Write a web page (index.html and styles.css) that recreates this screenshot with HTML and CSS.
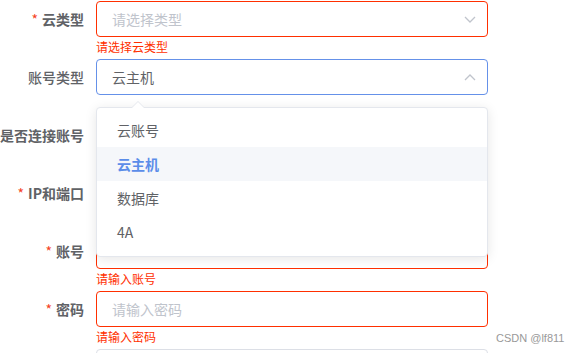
FILE: index.html
```html
<!DOCTYPE html>
<html lang="zh">
<head>
<meta charset="utf-8">
<link rel="stylesheet" href="styles.css">
</head>
<body>
<div class="form">
  <div class="item">
    <label class="label req">云类型</label>
    <div class="content">
      <div class="input error">
        <span class="placeholder">请选择类型</span>
        <svg class="chev" width="12" height="7" viewBox="0 0 12 7"><polyline points="1,1 6,6 11,1" fill="none" stroke="#c0c4cc" stroke-width="1.3"/></svg>
      </div>
      <div class="err">请选择云类型</div>
    </div>
  </div>
  <div class="item">
    <label class="label normal">账号类型</label>
    <div class="content">
      <div class="input focus">
        <span class="value">云主机</span>
        <svg class="chev" width="12" height="7" viewBox="0 0 12 7"><polyline points="1,6 6,1 11,6" fill="none" stroke="#c0c4cc" stroke-width="1.3"/></svg>
      </div>
    </div>
  </div>
  <div class="item">
    <label class="label">是否连接账号</label>
    <div class="content">
      <div class="input"></div>
    </div>
  </div>
  <div class="item">
    <label class="label req">IP和端口</label>
    <div class="content">
      <div class="input error"></div>
    </div>
  </div>
  <div class="item">
    <label class="label req">账号</label>
    <div class="content">
      <div class="input error"></div>
      <div class="err">请输入账号</div>
    </div>
  </div>
  <div class="item">
    <label class="label req">密码</label>
    <div class="content">
      <div class="input error"><span class="placeholder">请输入密码</span></div>
      <div class="err">请输入密码</div>
    </div>
  </div>
  <div class="item">
    <label class="label"></label>
    <div class="content">
      <div class="input"></div>
    </div>
  </div>

  <div class="dropdown">
    <div class="arrow"></div>
    <ul class="options">
      <li>云账号</li>
      <li class="selected">云主机</li>
      <li>数据库</li>
      <li>4A</li>
    </ul>
  </div>
</div>
<div class="watermark">CSDN @lf811</div>
</body>
</html>
```

FILE: styles.css
```css
html, body {
  margin: 0;
  padding: 0;
  background: #fff;
  overflow: hidden;
  height: 353px;
}
body {
  font-family: "Noto Sans CJK SC", "Noto Sans", sans-serif;
  color: #606266;
  position: relative;
}
.form {
  position: relative;
  padding-top: 1px;
  width: 488px;
}
.item {
  display: flex;
  margin-bottom: 22px;
}
.label {
  width: 96px;
  flex: none;
  box-sizing: border-box;
  padding-right: 12px;
  text-align: right;
  font-size: 14px;
  line-height: 36px;
  height: 36px;
  color: #606266;
  font-weight: 700;
  white-space: nowrap;
}
.label.normal {
  font-weight: 500;
}
.label.req::before {
  content: "*";
  color: #f5431f;
  margin-right: 4px;
  font-weight: 400;
}
.content {
  position: relative;
  width: 392px;
}
.input {
  box-sizing: border-box;
  height: 36px;
  border: 1px solid #dcdfe6;
  border-radius: 4px;
  display: flex;
  align-items: center;
  padding: 0 15px;
  font-size: 14px;
  position: relative;
}
.input.error {
  border-color: #ff2f00;
}
.input.focus {
  border-color: #6591e9;
}
.placeholder {
  color: #c0c4cc;
}
.value {
  color: #606266;
}
.chev {
  position: absolute;
  right: 11px;
  top: 14px;
}
.err {
  position: absolute;
  left: 0;
  top: 100%;
  padding-top: 4px;
  font-size: 12px;
  line-height: 1;
  color: #ff2f00;
}
.dropdown {
  position: absolute;
  left: 96px;
  top: 107px;
  width: 392px;
  box-sizing: border-box;
  border: 1px solid #e4e7ed;
  border-radius: 4px;
  background: #fff;
  box-shadow: 0 2px 12px rgba(0, 0, 0, 0.1);
}
.arrow {
  position: absolute;
  left: 35px;
  top: -7px;
  width: 0;
  height: 0;
  border-left: 6px solid transparent;
  border-right: 6px solid transparent;
  border-bottom: 6px solid #e4e7ed;
}
.arrow::after {
  content: "";
  position: absolute;
  left: -6px;
  top: 1px;
  border-left: 6px solid transparent;
  border-right: 6px solid transparent;
  border-bottom: 6px solid #fff;
}
.options {
  list-style: none;
  margin: 0;
  padding: 5px 0 7px;
}
.options li {
  height: 34px;
  line-height: 34px;
  padding: 0 20px;
  font-size: 14px;
  color: #606266;
}
.options li.selected {
  background: #f5f7fa;
  color: #5b8de9;
  font-weight: 700;
}
.watermark {
  position: absolute;
  left: 496px;
  top: 332px;
  font-family: "Liberation Sans", Arial, sans-serif;
  font-size: 11px;
  color: #999;
  white-space: nowrap;
}
```
